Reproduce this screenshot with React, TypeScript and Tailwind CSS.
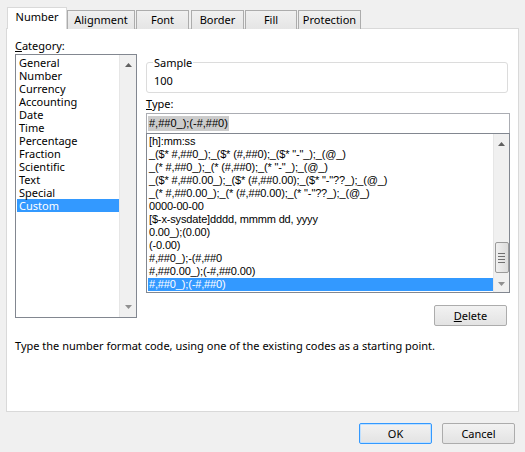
const categories = [
  "General",
  "Number",
  "Currency",
  "Accounting",
  "Date",
  "Time",
  "Percentage",
  "Fraction",
  "Scientific",
  "Text",
  "Special",
  "Custom",
];

const formats = [
  "[h]:mm:ss",
  '_($* #,##0_);_($* (#,##0);_($* "-"_);_(@_)',
  '_(* #,##0_);_(* (#,##0);_(* "-"_);_(@_)',
  '_($* #,##0.00_);_($* (#,##0.00);_($* "-"??_);_(@_)',
  '_(* #,##0.00_);_(* (#,##0.00);_(* "-"??_);_(@_)',
  "0000-00-00",
  "[$-x-sysdate]dddd, mmmm dd, yyyy",
  "0.00_);(0.00)",
  "(-0.00)",
  "#,##0_);-(#,##0",
  "#,##0.00_);(-#,##0.00)",
  "#,##0_);(-#,##0)",
];

const tabs = [
  { label: "Alignment", w: "w-[68px]" },
  { label: "Font", w: "w-[53px] ml-px" },
  { label: "Border", w: "w-[53px] ml-[2px]" },
  { label: "Fill", w: "w-[52px] ml-px" },
  { label: "Protection", w: "w-[63px] ml-px" },
];

function UpArrow() {
  return (
    <svg width="7" height="4" viewBox="0 0 7 4">
      <path d="M0 4 L3.5 0 L7 4 Z" fill="#606060" />
    </svg>
  );
}

function DownArrow() {
  return (
    <svg width="7" height="4" viewBox="0 0 7 4">
      <path d="M0 0 L3.5 4 L7 0 Z" fill="#909090" />
    </svg>
  );
}

function Btn({ children, primary }: { children: React.ReactNode; primary?: boolean }) {
  return (
    <button
      className={`w-[73px] h-[21px] rounded-[2px] border bg-gradient-to-b from-[#f2f2f2] to-[#e3e3e3] text-[11px] text-black leading-none ${
        primary ? "border-[#3399ff] shadow-[inset_0_0_0_1px_#bfe0ff]" : "border-[#acacac]"
      }`}
    >
      {children}
    </button>
  );
}

export default function App() {
  return (
    <div
      className="w-[525px] h-[452px] bg-[#f0f0f0] flex flex-col px-[6px] pt-[7px] text-[11px] text-black"
      style={{ fontFamily: '"Noto Sans", "Open Sans", sans-serif' }}
    >
      {/* TABS */}
      <div className="flex items-end pl-px h-[22px] relative z-10">
        <div className="w-[60px] h-[22px] bg-white border border-b-0 border-[#d9d9d9] flex items-center justify-center pb-[3px]">
          Number
        </div>
        {tabs.map((t) => (
          <div
            key={t.label}
            className={`${t.w} h-[19px] border border-[#acacac] border-b-0 bg-gradient-to-b from-[#f0f0f0] to-[#e5e5e5] flex items-center justify-center`}
          >
            {t.label}
          </div>
        ))}
      </div>

      {/* PANEL */}
      <div className="-mt-px h-[384px] bg-white border border-[#d9d9d9] flex flex-col px-[8px] pt-[10px]">
        <div className="flex gap-[9px]">
          {/* LEFT: category */}
          <div className="w-[122px] flex flex-col">
            <div className="h-[15px] leading-[14px]">
              <span className="underline">C</span>ategory:
            </div>
            <div className="h-[264px] border border-[#828790] flex">
              <div className="flex-1 pt-px pl-px">
                {categories.map((c) => (
                  <div
                    key={c}
                    className={`h-[13px] leading-[13px] pl-[2px] ${
                      c === "Custom" ? "bg-[#3399ff] text-white" : ""
                    }`}
                  >
                    {c}
                  </div>
                ))}
              </div>
              <div className="w-[17px] bg-[#f0f0f0] border-l border-[#e6e6e6] flex flex-col items-center justify-between py-[8px]">
                <UpArrow />
                <DownArrow />
              </div>
            </div>
          </div>

          {/* RIGHT: sample + type */}
          <div className="flex-1 flex flex-col">
            <fieldset className="mt-[17px] mr-[2px] h-[37px] border border-[#dcdcdc] rounded-[3px] px-[6px]">
              <legend className="px-px leading-[13px]">Sample</legend>
              <div className="pl-[1px] pt-[5px] leading-[14px]">100</div>
            </fieldset>

            <div className="mt-[4px] h-[16px] leading-[14px]">
              <span className="underline">T</span>ype:
            </div>
            <div className="h-[21px] border border-[#abadb3] flex items-center px-[1px]">
              <span
                className="bg-[#cccccc] px-px leading-[15px] text-[11px]"
                style={{ fontFamily: '"Liberation Sans", Arial, sans-serif' }}
              >
                #,##0_);(-#,##0)
              </span>
            </div>
            <div
              className="-mt-px h-[160px] border border-[#828790] flex"
              style={{ fontFamily: '"Liberation Sans", Arial, sans-serif' }}
            >
              <div className="flex-1 pt-[1px] pl-px text-[11px] tracking-[-0.15px] overflow-hidden whitespace-nowrap">
                {formats.map((f, i) => (
                  <div
                    key={i}
                    className={`h-[13px] leading-[13px] pl-[1px] ${
                      i === formats.length - 1 ? "bg-[#3399ff] text-white" : ""
                    }`}
                  >
                    {f}
                  </div>
                ))}
              </div>
              <div className="w-[16px] bg-[#f0f0f0] border-l border-[#e6e6e6] flex flex-col items-center pt-[8px] pb-[6px]">
                <UpArrow />
                <div className="flex-1" />
                <div className="w-[14px] h-[31px] rounded-[2px] border border-[#9a9a9a] bg-gradient-to-r from-[#f0f0f0] to-[#dcdcdc] flex flex-col items-center justify-center gap-[2px] mb-[9px]">
                  <div className="w-[7px] h-px bg-[#707070]" />
                  <div className="w-[7px] h-px bg-[#707070]" />
                  <div className="w-[7px] h-px bg-[#707070]" />
                  <div className="w-[7px] h-px bg-[#707070]" />
                </div>
                <DownArrow />
              </div>
            </div>

            {/* DELETE */}
            <div className="flex justify-end mt-[12px] pr-[3px]">
              <Btn>
                <span className="underline">D</span>elete
              </Btn>
            </div>
          </div>
        </div>

        <div className="mt-[13px] leading-[14px]">
          Type the number format code, using one of the existing codes as a starting point.
        </div>
      </div>

      {/* FOOTER BUTTONS */}
      <div className="flex justify-end gap-[10px] mt-[11px] pr-[4px]">
        <Btn primary>OK</Btn>
        <Btn>Cancel</Btn>
      </div>
    </div>
  );
}
